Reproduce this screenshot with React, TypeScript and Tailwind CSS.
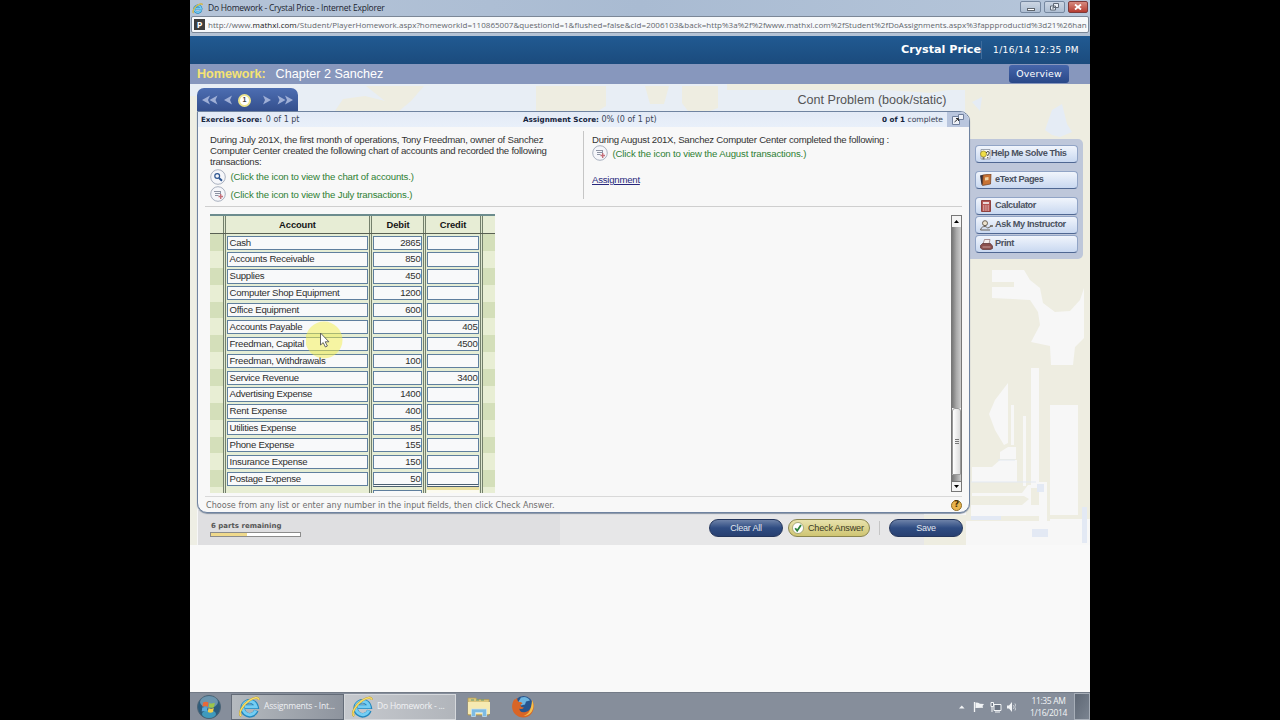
import type { ReactNode } from 'react';
import clsx from 'clsx';

interface AccountRow {
  account: string;
  debit?: number;
  credit?: number;
}

const rows: AccountRow[] = [
  { account: 'Cash', debit: 2865 },
  { account: 'Accounts Receivable', debit: 850 },
  { account: 'Supplies', debit: 450 },
  { account: 'Computer Shop Equipment', debit: 1200 },
  { account: 'Office Equipment', debit: 600 },
  { account: 'Accounts Payable', credit: 405 },
  { account: 'Freedman, Capital', credit: 4500 },
  { account: 'Freedman, Withdrawals', debit: 100 },
  { account: 'Service Revenue', credit: 3400 },
  { account: 'Advertising Expense', debit: 1400 },
  { account: 'Rent Expense', debit: 400 },
  { account: 'Utilities Expense', debit: 85 },
  { account: 'Phone Expense', debit: 155 },
  { account: 'Insurance Expense', debit: 150 },
  { account: 'Postage Expense', debit: 50 },
];

function IeLogo({ className }: { className: string }) {
  return (
    <svg viewBox="0 0 22 22" className={className}>
      <path d="M18.3 14.5A7 7 0 1 1 18.5 10.8H7" fill="none" stroke="#2386bd" strokeWidth="4.6" />
      <path d="M17.8 14.5A6.7 6.7 0 1 1 18.2 10.8H7" fill="none" stroke="#74cdf3" strokeWidth="3" />
      <path d="M3.2 20C-.2 17.5 4.5 9 11 4.6 16 1.2 20.8.6 20.7 3.8" fill="none" stroke="#b99a2d" strokeWidth="2.2" />
      <path d="M3.2 20C-.2 17.5 4.5 9 11 4.6 16 1.2 20.8.6 20.7 3.8" fill="none" stroke="#f6dd6a" strokeWidth="1.4" />
    </svg>
  );
}

function TitleBar() {
  return (
    <div className="flex h-4 items-center bg-linear-to-r from-[#b5c4d8] via-[#a9bbd2] to-[#b6c6da] pl-0.5">
      <IeLogo className="h-[11px] w-[11px]" />
      <span className="ml-[5px] grow text-[8.5px] leading-4 tracking-[-0.24px] text-[#1c2430]">
        Do Homework - Crystal Price - Internet Explorer
      </span>
      <div className="flex items-start gap-[3px] self-start pt-px pr-0.5">
        <span className="flex h-[12px] w-[21px] items-center justify-center rounded-[2px] border border-[#7688a0] bg-linear-to-b from-[#ccd6e3] to-[#aebed2]">
          <i className="mt-1 h-[3px] w-2 border border-[#60676f] bg-white" />
        </span>
        <span className="flex h-[12px] w-[21px] items-center justify-center rounded-[2px] border border-[#7688a0] bg-linear-to-b from-[#ccd6e3] to-[#aebed2]">
          <svg viewBox="0 0 9 8" className="h-2 w-[9px]" fill="#eef2f7" stroke="#5f6874">
            <path d="M3.5.5h5v4h-5zM.5 3h5v4h-5z" />
            <path d="M2 5h2" />
          </svg>
        </span>
        <span className="flex h-[12px] w-[20px] items-center justify-center rounded-[2px] border border-[#7e3a3a] bg-linear-to-b from-[#d68a80] to-[#b53a30]">
          <svg viewBox="0 0 8 6" className="h-1.5 w-2">
            <path d="m1 .5 6 5m0-5-6 5" stroke="#fff" strokeWidth="1.8" />
          </svg>
        </span>
      </div>
    </div>
  );
}

function AddressBar() {
  return (
    <div className="h-5 bg-[#b4c2d4] px-px pb-[3px]">
      <div className="flex h-[17px] items-center rounded-[2px] border border-[#7b8797] bg-[#f7f9fb] pl-[2px] whitespace-nowrap">
        <span className="flex h-[11px] w-[11px] shrink-0 items-center justify-center bg-[#3d3d3d] text-[9px] font-bold text-white">
          P
        </span>
        <span className="ml-[3px] text-[8px] tracking-[0.03px] text-[#62666c]">
          http://www.<span className="text-[#181818]">mathxl.com</span>
          /Student/PlayerHomework.aspx?homeworkId=110865007&amp;questionId=1&amp;flushed=false&amp;cId=2006103&amp;back=http%3a%2f%2fwww.mathxl.com%2fStudent%2fDoAssignments.aspx%3fappproductid%3d21%26han
        </span>
      </div>
    </div>
  );
}

// faded map pattern behind the player
function Backdrop() {
  return (
    <svg className="absolute inset-0 h-[461px] w-[900px]" viewBox="190 84 900 461">
      <rect x="190" y="84" width="900" height="461" fill="#f7f7f7" />
      <rect x="190" y="84" width="900" height="30" fill="#e8eef5" />
      <path d="M366 86h58l-13 15-12 10h-64l8-12 22-3 20 5z" fill="#eeede1" />
      <path d="M536 86h70v20l-8 5h-62zM645 86h24l-5 18h-14zM682 86h36v22l-8 3h-22l-6-8z" fill="#eeede1" />
      <path d="M727 84h363v6H727zM860 88h100l-30 5z" fill="#eeede1" />
      <rect x="190" y="96" width="7" height="449" fill="#eeeee4" />
      <path d="M965 86h125v433h-14l-4 2H966z" fill="#eeede1" />
      <path d="M1052 110l10-6 5 20 5 8-12 5-8-2-7-5zM972 102l10-5-2 14z" fill="#e5ecf5" />
      <path d="M992 270h32l6 10 10 8 3 15 12 9 15-1 10-11 4-12v50l-9 9-2 18h-22l-1-19-19-4 9-17-2-13-8-12-38-2v-11h22v-5h-22z" fill="#f7f7f7" />
      <path d="M1008 383v60l-4 2-9-15-6-16 6-14zM1031 368h8v120h-8zM1011 405h3v40h-3zM1023 416h3v70h-3zM1050 405h28v110h-28z" fill="#f7f7f7" />
      <path d="M1000 460h17v22h-45v-15h20zM1000 452l8-5h8v12h-16zM972 493h50l6-8h3v30h-59v-10h50l7-6-5-3h-52zM1039 482h8v40h-8zM971 505h75v11h-75z" fill="#f7f7f7" />
      <path d="M1050 519h28v26h-28zM966 528h124v17H966zM1078 519h12v26h-12z" fill="#f7f7f7" />
      <path d="M971 516h30v4h-30zM1037 484h7v8h-7zM1032 529h16v8h-16zM1082 507h5v36h-5z" fill="#e3e9f4" />
      <path d="M971 482h65M998 460h17" stroke="#e3e9f2" />
      <rect x="198" y="510" width="362" height="35" fill="#dfdfe1" />
      <rect x="560" y="510" width="364" height="35" fill="#e7e7e8" />
      <rect x="924" y="515" width="42" height="30" fill="#eeede1" />
    </svg>
  );
}

function PagerArrows({ flip }: { flip?: boolean }) {
  return (
    <svg viewBox="0 0 30 10" className={clsx('h-[10px] w-[30px]', flip && '-scale-x-100')} fill="#9fafd6">
      <path d="M8 .5 0 5l8 4.5L6 5zM15.5.5 7.5 5l8 4.5L13.5 5zM30 .5 22 5l8 4.5L28 5z" />
    </svg>
  );
}

function RoundIcon({ kind }: { kind: 'search' | 'list' }) {
  return (
    <svg viewBox="0 0 16 16" className="h-4 w-4 shrink-0">
      <circle cx="8" cy="8" r="7.3" fill="#f5f6fa" stroke="#a9b1bf" />
      {kind === 'search' ? (
        <g fill="none" stroke="#2c5490">
          <circle cx="7.2" cy="7" r="2.4" strokeWidth="1.2" />
          <path d="m9 9 3 2.8" strokeWidth="1.9" />
        </g>
      ) : (
        <g fill="none">
          <path d="M4 5.5h6.5M5 7.5h5M5 9.5h3.5" stroke="#8d93a3" />
          <path d="M10.5 5v3.5" stroke="#8d93a3" />
          <path d="M10.7 8v5M8.5 10.5H13" stroke="#c4707a" strokeWidth="1.4" />
        </g>
      )}
    </svg>
  );
}

function PopupLink({ kind, children }: { kind: 'search' | 'list'; children: ReactNode }) {
  return (
    <div className="flex h-[17.5px] items-center gap-[4.5px] text-[9.6px] tracking-[-0.15px] text-[#2e8033]">
      <RoundIcon kind={kind} />
      <span>{children}</span>
    </div>
  );
}

function Field({ value, align, total }: { value?: string | number; align?: 'right'; total?: boolean }) {
  return (
    <div
      className={clsx(
        'mx-px mt-[1.5px] border border-[#5f7f9e] bg-[#f8f9fa] text-[9.6px] leading-[12px] tracking-[-0.25px] whitespace-nowrap text-[#2e2e2e]',
        align ? 'pr-[0.5px] text-right' : 'pl-[1.5px]',
        total ? 'h-[15.4px] border-b-[3px] border-b-[#4a5f70] [border-bottom-style:double]' : 'h-[14.3px]',
      )}
    >
      {value}
    </div>
  );
}

const gridCols = 'grid grid-cols-[13px_3px_143px_3px_51px_3px_54px_3px_12px]';
const rule = 'border-x border-[#74806c] bg-[#dfe8d0]';

function TrialBalance() {
  return (
    <div className="h-[279px] w-[285px] overflow-hidden border-t-2 border-[#6c8c8e]">
      <div className={clsx(gridCols, 'h-[18px] border-b border-[#596053] bg-[#e7edd5] text-center text-[9.4px] leading-[17px] font-bold tracking-[-0.1px] text-[#151515]')}>
        <span />
        <span className={rule} />
        <span>Account</span>
        <span className={rule} />
        <span className="pl-px">Debit</span>
        <span className={rule} />
        <span>Credit</span>
        <span className={rule} />
        <span />
      </div>
      {rows.map((row, i) => {
        const last = i === rows.length - 1;
        return (
          <div key={row.account} className={clsx(gridCols, 'h-[16.89px] bg-[#e5edd5]')}>
            <span className={i % 2 ? 'bg-[#e8eed4]' : 'bg-[#d4dfba]'} />
            <span className={rule} />
            <Field value={row.account} />
            <span className={rule} />
            <Field value={row.debit} align="right" total={last} />
            <span className={rule} />
            <Field value={row.credit} align="right" total={last} />
            <span className={rule} />
            <span className={i % 2 ? 'bg-[#e8eed4]' : 'bg-[#d4dfba]'} />
          </div>
        );
      })}
      <div className={clsx(gridCols, 'h-[17px] bg-[#e8eed4]')}>
        <span />
        <span className={rule} />
        <span />
        <span className={rule} />
        <span className="mx-px mt-[3px] border border-[#5f7f9e] bg-[#f8f9fa]" />
        <span className={rule} />
        <span className="mx-px border-t-[3px] border-[#e9dfa0] bg-[#fbfaf0]" />
        <span className={rule} />
        <span />
      </div>
    </div>
  );
}

function Scrollbar() {
  return (
    <div className="flex h-[277px] w-[11px] flex-col border border-[#777]">
      <span className="flex h-[11px] items-center justify-center bg-[#f5f5f5]">
        <svg viewBox="0 0 5 3" className="h-[3px] w-[5px]"><path d="M0 3 2.5 0 5 3z" /></svg>
      </span>
      <span className="h-[181px] bg-linear-to-r from-[#777] via-[#aaa] to-[#ccc]" />
      <span className="flex h-[67px] flex-col items-center justify-center gap-px rounded-t-[3px] border border-[#999] bg-linear-to-r from-white to-[#ddd]">
        <i className="h-px w-1 bg-[#777]" />
        <i className="h-px w-1 bg-[#777]" />
        <i className="h-px w-1 bg-[#777]" />
      </span>
      <span className="grow bg-linear-to-r from-[#777] to-[#ccc]" />
      <span className="flex h-[10px] items-center justify-center border-t border-[#777] bg-[#f5f5f5]">
        <svg viewBox="0 0 5 3" className="h-[3px] w-[5px]"><path d="M0 0h5L2.5 3z" /></svg>
      </span>
    </div>
  );
}

function Cursor() {
  return (
    <svg className="absolute top-[207px] left-[108px] h-10 w-10" viewBox="0 0 40 40">
      <circle cx="18" cy="21" r="18.5" fill="#f3f04a" opacity=".5" />
      <path d="M14.5 14v12l2.7-2.4 2.2 4.4 2-1-2.2-4.2h3.7z" fill="#fff" stroke="#555" strokeWidth=".9" />
    </svg>
  );
}

function Player() {
  return (
    <div className="relative h-[402px] w-[773px] rounded-tr-[10px] rounded-b-[10px] border border-[#6f83a0] bg-[#f8f8f8] shadow-[0_1px_1px_#8793a3]">
      <div className="flex h-[15px] items-center overflow-hidden rounded-tr-[9px] bg-linear-to-b from-[#e3eaf6] to-[#e9f0fa] font-['DejaVu_Sans',sans-serif] text-[8px] whitespace-nowrap text-[#3a4557]">
        <span className="w-[322px] pl-[3px]">
          <b className="mr-px text-[7.1px] text-[#14233c]">Exercise Score:</b>&nbsp;0 of 1 pt
        </span>
        <span className="grow pl-[3px]">
          <b className="text-[7.2px] text-[#14233c]">Assignment Score:</b> 0% (0 of 1 pt)
        </span>
        <span className="pr-1 text-[7.6px]">
          <b className="text-[7.2px] text-[#14233c]">0 of 1</b> complete
        </span>
        <span className="flex h-full w-[22px] items-center justify-center bg-[#b9c6de]">
          <svg viewBox="0 0 12 11" className="h-[11px] w-3" fill="#eef1f7" stroke="#6f7f9c">
            <path d="M.5 2.5h7v8h-7z" />
            <path d="M6.5.5h5v5h-5z" />
            <path d="M2.5 8 6 5M4 4.5h2.5V7" fill="none" stroke="#333" />
          </svg>
        </span>
      </div>

      <div className="mx-[7px] flex h-[80px] border-b border-[#cfcfcf] pt-1">
        <div className="h-[68px] w-[379px] border-r border-[#c6c6c6] pl-[5px] text-[9.6px] leading-[11px] tracking-[-0.225px] text-[#333]">
          <p className="mt-[2.5px] mb-[1.4px] whitespace-nowrap">
            During July 201X, the first month of operations, Tony Freedman, owner of Sanchez
            <br />
            Computer Center created the following chart of accounts and recorded the following
            <br />
            transactions:
          </p>
          <PopupLink kind="search">(Click the icon to view the chart of accounts.)</PopupLink>
          <PopupLink kind="list">(Click the icon to view the July transactions.)</PopupLink>
        </div>
        <div className="pt-[2.5px] pl-2 text-[9.6px] leading-[11px] tracking-[-0.225px] text-[#333]">
          <p>During August 201X, Sanchez Computer Center completed the following :</p>
          <PopupLink kind="list">(Click the icon to view the August transactions.)</PopupLink>
          <a className="mt-3 block text-[#28287c] underline">Assignment</a>
        </div>
      </div>

      <div className="flex h-[289px] justify-between pt-[7px] pr-[7px] pl-3">
        <TrialBalance />
        <div className="pt-px">
          <Scrollbar />
        </div>
      </div>

      <div className="mx-[7px] flex h-[17px] items-center justify-between border-t border-[#d9d9d9] font-['DejaVu_Sans',sans-serif] text-[8.08px] text-[#6c6c6c]">
        <span className="pt-px pl-px">Choose from any list or enter any number in the input fields, then click Check Answer.</span>
        <span className="flex h-[11px] w-[11px] items-center justify-center rounded-full border border-[#8f6d24] bg-[#e9b44c] text-[9px] font-bold text-[#4a3508]">
          ?
        </span>
      </div>
      <Cursor />
    </div>
  );
}

const navyPill =
  'flex h-[18px] w-[74px] items-center justify-center rounded-full border border-[#24365c] bg-linear-to-b from-[#6e82a8] via-[#2f4c82] to-[#284071] pt-px text-[9px] tracking-[-0.2px] text-[#e4e8f0]';

function Actions() {
  return (
    <div className="flex h-8 w-[773px] items-start">
      <div className="w-[512px] pt-[9px] pl-[13px] font-['DejaVu_Sans',sans-serif] text-[7px] leading-[8px] font-bold text-[#565656]">
        <div className="pl-px">6 parts remaining</div>
        <div className="mt-[2px] h-[5px] w-[91px] border border-[#8c8c8c] bg-white">
          <div className="h-full w-[36px] bg-[#efd98c]" />
        </div>
      </div>
      <div className="flex items-center pt-[6px]">
        <div className={navyPill}>Clear All</div>
        <div className="ml-[5px] flex h-[18px] w-[82px] items-center gap-[4px] rounded-full border border-[#8b8650] bg-linear-to-b from-[#e8e2ac] to-[#cfc572] pl-[3px] text-[9.1px] tracking-[-0.2px] whitespace-nowrap text-[#3b3a25]">
          <svg viewBox="0 0 12 12" className="h-3 w-3 shrink-0">
            <circle cx="6" cy="6" r="5.5" fill="#fff" stroke="#8b8f5a" strokeWidth=".7" />
            <path d="m3.2 6.2 2 2.6L9 3" fill="none" stroke="#29823b" strokeWidth="1.8" />
          </svg>
          <span className="pt-px">Check Answer</span>
        </div>
        <i className="mr-[9px] ml-[9px] h-[14px] w-px bg-[#c5c5c5]" />
        <div className={navyPill}>Save</div>
      </div>
    </div>
  );
}

const toolIcons = {
  help: (
    <svg viewBox="0 0 11 11" className="h-[11px] w-[11px]">
      <path d="M1 .5h9v9.5H1z" fill="#f8f8f4" stroke="#8890a0" strokeWidth=".8" />
      <circle cx="3.5" cy="5" r="3" fill="#f0df45" stroke="#8b7d27" strokeWidth=".7" />
      <path d="M2.5 8h2v2.5h-2z" fill="#777" />
      <path d="M6.5 4c0-2.5 3.5-1.5 2.5.4L7.8 6v1m0 1v1.3" fill="none" stroke="#333" />
    </svg>
  ),
  book: (
    <svg viewBox="0 0 13 12" className="h-3 w-[13px]">
      <path d="M0 1.5 3 .8v9L1.5 11z" fill="#35323c" />
      <path d="m3 1 8-1-.5 10L2.5 11.5z" fill="#c87335" stroke="#6e3d20" strokeWidth=".7" />
      <path d="m5 3.5 3.5-.5v3l-3.5.6z" fill="#efd2a5" />
    </svg>
  ),
  calc: (
    <svg viewBox="0 0 10 12" className="h-3 w-[10px]">
      <path d="M.5.5h9v11h-9z" fill="#b55653" stroke="#8f4240" />
      <path d="M2 2h6v2H2z" fill="#ead8d8" />
      <path d="M2 6h6M2 8h6M2 10h6" stroke="#ecd7d7" strokeDasharray="1.3 1" />
    </svg>
  ),
  ask: (
    <svg viewBox="0 0 13 11" className="h-[11px] w-[13px]" fill="none" stroke="#6a6257">
      <circle cx="5" cy="3.2" r="2.5" fill="#eee3cd" />
      <path d="M.5 10c.5-3 3-3.5 4.500-3.500S7 8 8 8l3.500-2M.5 10H10" />
      <path d="M10 6h3" strokeWidth="1.5" />
    </svg>
  ),
  print: (
    <svg viewBox="0 0 13 11" className="h-[11px] w-[13px]">
      <path d="m3 5 1.5-4.500H10L9 5z" fill="#f5eeee" stroke="#8b6a6a" strokeWidth=".7" />
      <path d="M2.5 4.500h8L12.500 7v2.500l-2 1h-8L.5 9V6.500z" fill="#8a4e4c" stroke="#5d3433" strokeWidth=".7" />
      <path d="M2.5 8h8" stroke="#c99d9a" />
    </svg>
  ),
};

function ToolButton({ icon, label, wide }: { icon: keyof typeof toolIcons; label: string; wide?: boolean }) {
  return (
    <div className="flex h-[18px] w-[103px] items-center rounded-[4px] border border-[#91a4c6] border-b-[#4f6792] bg-linear-to-b from-[#f1f5fc] to-[#c9d8f0] pl-[3px] text-[9.2px] font-bold whitespace-nowrap text-[#4b5260]">
      <span className={clsx('flex shrink-0 justify-center', wide ? 'w-[12px]' : 'mr-[2px] w-[14px]')}>{toolIcons[icon]}</span>
      <span className={wide ? 'tracking-[-0.46px]' : 'tracking-[-0.4px]'}>{label}</span>
    </div>
  );
}

function Sidebar() {
  return (
    <div className="mt-[55px] flex h-[120px] w-[113px] flex-col rounded-r-[5px] bg-[#bec7da] pt-[6px] pl-[5px]">
      <ToolButton icon="help" label="Help Me Solve This" wide />
      <div className="mt-2">
        <ToolButton icon="book" label="eText Pages" />
      </div>
      <div className="mt-2 flex flex-col gap-px">
        <ToolButton icon="calc" label="Calculator" />
        <ToolButton icon="ask" label="Ask My Instructor" />
        <ToolButton icon="print" label="Print" />
      </div>
    </div>
  );
}

function Taskbar() {
  return (
    <div className="flex h-7 items-center border-t border-[#737b87] bg-[#868e9b] font-['Open_Sans',sans-serif]">
      <svg viewBox="0 0 24 24" className="ml-[7px] h-6 w-6">
        <circle cx="12" cy="12" r="11.5" fill="#2d5c7c" stroke="#4c6475" />
        <ellipse cx="12" cy="7" rx="9" ry="6" fill="#8db4c9" opacity=".65" />
        <ellipse cx="12" cy="19" rx="7" ry="4" fill="#47b5d8" opacity=".7" />
        <path d="M6 7.5q3-1.500 5.500 0l-.7 4.200q-2.500-1.300-5.300 0z" fill="#e8693a" />
        <path d="M12.3 8q2.500 1.300 5.500-.2l-.8 4.400q-2.700 1.200-5.300-.1z" fill="#9cc649" />
        <path d="M5.3 12.600q2.600-1.300 5.300 0l-.7 4q-2.300-1.200-5.200 0z" fill="#57a8dc" />
        <path d="M11.5 13q2.500 1.300 5.300.1l-.8 4q-2.600 1.300-5.200-.1z" fill="#f6cf48" />
      </svg>
      <div className="ml-[10px] flex h-[26px] w-[113px] items-center border border-[#646c78] bg-linear-to-r from-[#b5babf] to-[#8e949e] pl-[6px] text-[8.5px] tracking-[-0.2px] whitespace-nowrap text-[#eef0f3]">
        <IeLogo className="h-[22px] w-[22px]" />
        <span className="ml-1">Assignments - Int...</span>
      </div>
      <div className="flex h-[26px] w-[112px] items-center border border-[#d5d8dc] bg-linear-to-r from-[#c6c9ce] to-[#b1b5bb] pl-[6px] text-[8.5px] tracking-[-0.2px] whitespace-nowrap text-[#f1f2f4]">
        <IeLogo className="h-[22px] w-[22px]" />
        <span className="ml-1">Do Homework - ...</span>
      </div>
      <svg viewBox="0 0 24 22" className="ml-[11px] h-[22px] w-6">
        <path d="M1 2h8l1 1.500h12V19H1z" fill="#dcc67c" stroke="#b49b52" strokeWidth=".7" />
        <path d="M1 6h22v12H1z" fill="#f6eab2" />
        <path d="M4 4h15" stroke="#5e9a78" strokeDasharray="3 2" />
        <path d="M4.5 20.500V13h15v7.500h-4V16.500h-7v4z" fill="#7dbbe2" stroke="#cbe5f4" strokeWidth=".7" />
      </svg>
      <svg viewBox="0 0 24 24" className="ml-[20px] h-6 w-6">
        <circle cx="12.5" cy="10.5" r="9.5" fill="#28558e" />
        <path d="M10 2.500q6-2 9 3l-4 1-1 3-4 1-3-3z" fill="#6db4df" />
        <path d="M3.5 4C0 9 .5 15 4 19c5 5 13 4.500 16.500-.5 3-4 3-9.500.5-13.500.5 7-2 11-6.500 12C10 18 8 15.500 8.500 13.500c1.500 1 3 .5 4.500-.7-1.500-.8-3.500-.8-3.500-2.300 0-1 1.200-1.500 2-2C10.500 7 9 7 8 7.200 6.500 5.800 6.200 5 6.200 3 5.200 3.300 4.500 4 4 5z" fill="#d96526" />
        <path d="M21 5c2.500 5 1.500 9-.5 12-2 2.500-5 4-8 4 5-1.500 8-6 8.500-16" fill="#f5c14b" />
      </svg>
      <div className="ml-auto flex h-full items-center">
        <svg viewBox="0 0 62 14" className="mr-[14px] h-[14px] w-[62px]" fill="#f2f4f6">
          <path d="m5 8.500 2.800-3 2.800 3z" />
          <path d="M20.500 2v10" stroke="#f2f4f6" strokeWidth="1.3" />
          <path d="M21.500 2.500q3 0 4.500 1.200l4 .3-1.500 2 .7 1.800-7.700.2z" />
          <path d="M40 4.500h7v6h-7zM37 2.500h2.500v4H37zM38 6v6M41 12h5" fill="#6b7482" stroke="#f2f4f6" />
          <path d="M53 5.500h2L58 2v10l-3-3.500h-2z" />
          <path d="M59.500 5q1.500 2 0 4m1.500-5.500q2.500 3.500 0 7" fill="none" stroke="#dfe3e7" strokeWidth=".8" />
        </svg>
        <div className="w-[37px] text-center text-[8.5px] leading-[12px] tracking-[-0.35px] whitespace-nowrap text-[#f2f4f6]">
          11:35 AM
          <br />
          1/16/2014
        </div>
        <div className="ml-[7px] h-[27px] w-4 border border-[#a7aeb8] bg-linear-to-br from-[#5f6875] to-[#7a8390]" />
      </div>
    </div>
  );
}

export default function App() {
  return (
    <div className="flex h-[720px] w-[1280px] justify-center overflow-hidden bg-black font-['Liberation_Sans',Arial,sans-serif]">
      <div className="flex w-[900px] flex-col bg-[#f9f9f9]">
        <div className="font-['Open_Sans',sans-serif]">
          <TitleBar />
          <AddressBar />
        </div>
        <div className="flex h-7 items-center justify-end bg-linear-to-b from-[#215a92] to-[#1b4b7d] pr-[11px] font-['DejaVu_Sans',sans-serif] text-white">
          <span className="border-r border-[#3d6c9d] pt-px text-[11.2px] font-bold">Crystal Price</span>
          <span className="ml-[11px] pt-[2px] text-[9px] tracking-[0.4px]">1/16/14 12:35 PM</span>
        </div>
        <div className="flex h-5 items-center bg-[#8797bd] pl-[7px] text-[12.6px] text-white">
          <b className="text-[#f5e373]">Homework:</b>
          <span className="ml-[10px] grow">Chapter 2 Sanchez</span>
          <span className="mr-[21px] flex h-[18px] w-[60px] items-center justify-center rounded-[3px] bg-linear-to-b from-[#4666ab] to-[#294888] pt-px font-['DejaVu_Sans',sans-serif] text-[9.4px] tracking-[0.2px]">
            Overview
          </span>
        </div>
        <div className="relative h-[461px]">
          <Backdrop />
          <div className="relative flex pl-[7px]">
            <div className="w-[773px]">
              <div className="flex h-[27px] items-end justify-between">
                <div className="flex h-[23px] w-[101px] items-center rounded-t-[7px] bg-linear-to-b from-[#4d6eb2] to-[#344f8d] pl-[5px]">
                  <PagerArrows />
                  <span className="mx-[6px] mt-px flex h-[13px] w-[13px] shrink-0 items-center justify-center rounded-full border-2 border-[#ece58e] bg-white text-[7px] font-bold text-[#444]">
                    1
                  </span>
                  <span className="pl-[6px]">
                    <PagerArrows flip />
                  </span>
                </div>
                <span className="mr-[23.5px] text-[12.6px] leading-[22px] text-[#555]">Cont Problem (book/static)</span>
              </div>
              <Player />
              <Actions />
            </div>
            <Sidebar />
          </div>
        </div>
        <div className="grow" />
        <Taskbar />
      </div>
    </div>
  );
}
